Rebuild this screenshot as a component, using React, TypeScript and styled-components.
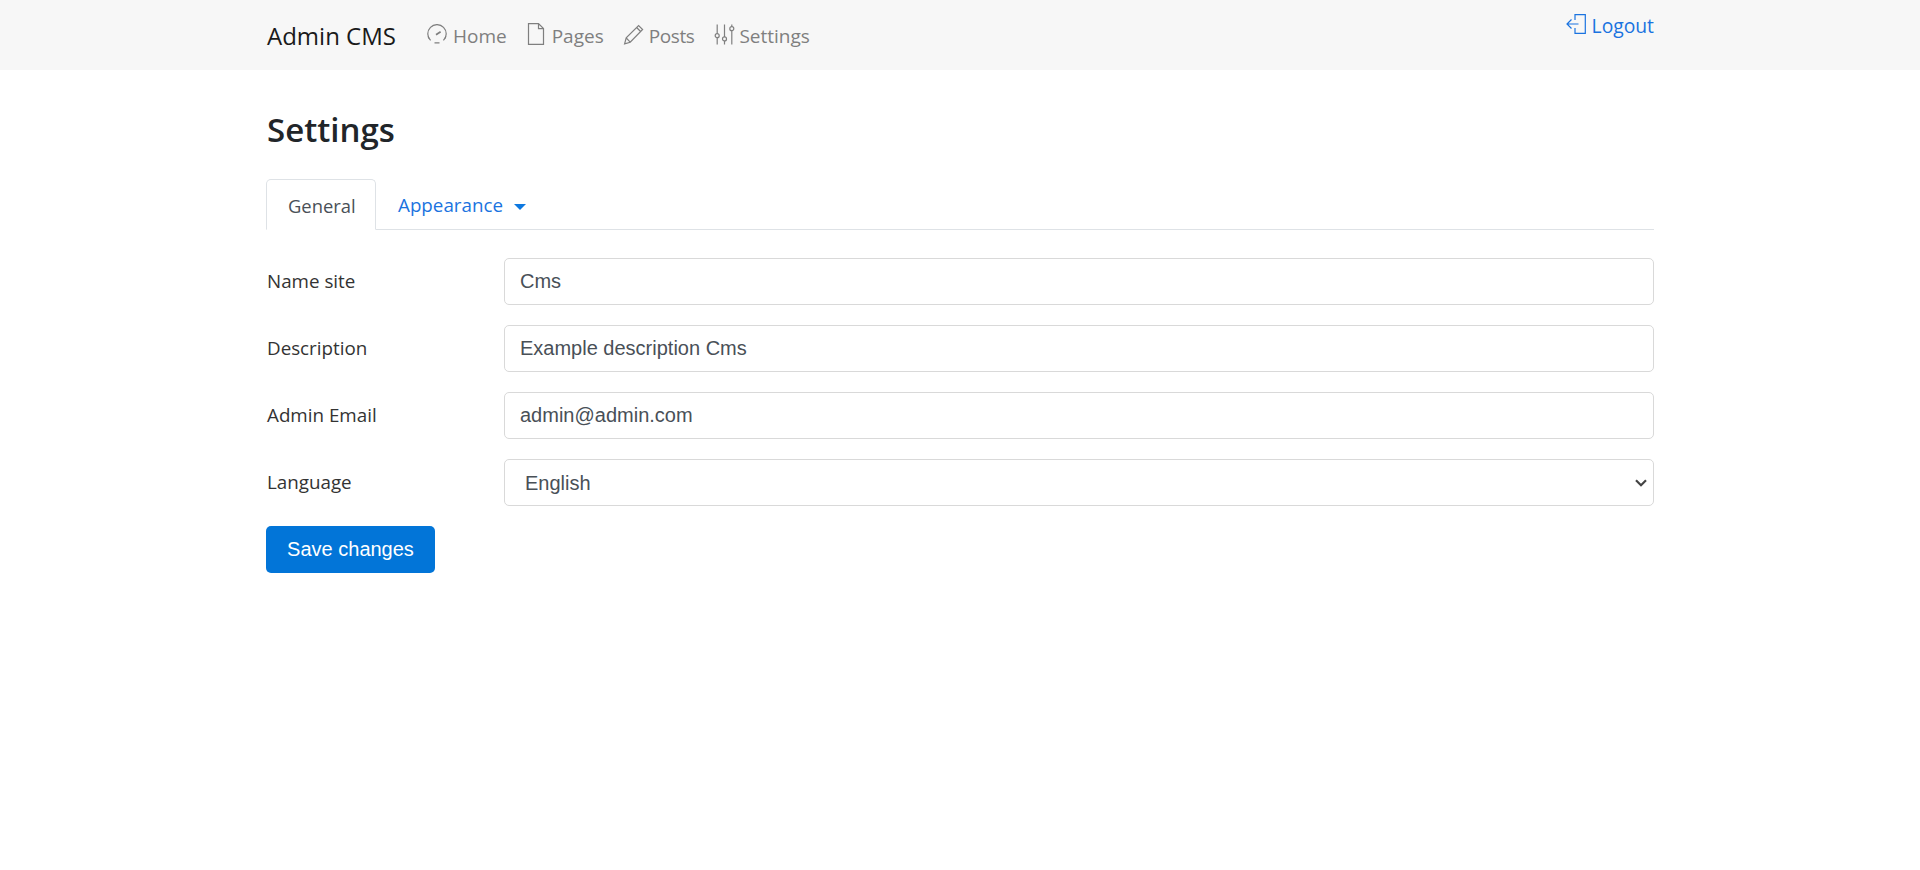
import React from "react";
import styled, { createGlobalStyle } from "styled-components";

const Global = createGlobalStyle`
  * { box-sizing: border-box; }
  html, body { margin: 0; padding: 0; background: #fff; }
  body { font-family: "Open Sans", "Noto Sans", sans-serif; font-size: 20px; line-height: 30px; color: #212529; }
`;

const Navbar = styled.nav`
  height: 70px;
  background: #f7f7f7;
`;
const NavInner = styled.div`
  width: 1388px;
  margin: 0 auto;
  display: flex;
  justify-content: space-between;
  align-items: flex-start;
`;
const NavLeft = styled.div`
  display: flex;
  align-items: center;
  height: 72px;
`;
const Brand = styled.a`
  font-size: 24px;
  padding-left: 1px;
  color: #1a1a1a;
  margin-right: 31px;
`;
const NavLink = styled.a<{ $gap: number; $after: number; $tight?: boolean }>`
  display: flex;
  align-items: center;
  gap: ${(p) => p.$gap}px;
  font-size: 19px;
  color: #7f7f7f;
  margin-right: ${(p) => p.$after}px;
  letter-spacing: ${(p) => (p.$tight ? "-0.4px" : "0")};
`;
const LogoutLink = styled.a`
  display: flex;
  align-items: center;
  gap: 6px;
  font-size: 19.3px;
  color: #1a73e0;
  height: 52px;
`;
const Icon = styled.svg`
  fill: none;
  stroke: currentColor;
  stroke-width: 1.2;
  flex: none;
  margin-top: -4px;
`;
const Main = styled.main`
  width: 1388px;
  margin: 0 auto;
`;
const Title = styled.h1`
  margin: 0;
  padding: 36px 0 0 1px;
  font-size: 33px;
  line-height: 48px;
  font-weight: 600;
  color: #212529;
`;
const Tabs = styled.div`
  display: flex;
  margin-top: 25px;
  height: 51px;
  border-bottom: 1px solid #dee2e6;
`;
const ActiveTab = styled.a`
  display: flex;
  align-items: center;
  width: 110px;
  height: 51px;
  padding: 2px 0 0 21px;
  background: #fff;
  border: 1px solid #dee2e6;
  border-bottom-color: #fff;
  border-radius: 5px 5px 0 0;
  font-size: 18.4px;
  color: #495057;
`;
const Tab = styled.a`
  display: flex;
  align-items: center;
  padding: 2px 0 0 22px;
  font-size: 18.8px;
  color: #1a73e0;
`;
const Caret = styled.span`
  width: 0;
  height: 0;
  margin-left: 11px;
  margin-top: 3px;
  border-top: 6px solid #0d78e0;
  border-left: 6px solid transparent;
  border-right: 6px solid transparent;
`;
const Form = styled.form`
  padding-top: 28px;
`;
const Row = styled.div`
  display: grid;
  grid-template-columns: 238px 1fr;
  align-items: center;
  margin-bottom: 20px;
`;
const Label = styled.label`
  padding: 0 0 2px 1px;
  font-size: 18.8px;
  color: #333;
`;
const Input = styled.input`
  height: 47px;
  width: 100%;
  padding: 0 15px;
  border: 1px solid #d9d9d9;
  border-radius: 5px;
  font-family: "Liberation Sans", Arial, sans-serif;
  font-size: 20px;
  color: #495057;
  background: #fff;
  outline: none;
`;
const SelectWrap = styled.div`
  position: relative;
  height: 47px;
`;
const Select = styled.select`
  appearance: none;
  display: block;
  height: 47px;
  width: 100%;
  padding: 0 30px 0 20px;
  border: 1px solid #d9d9d9;
  border-radius: 5px;
  font-family: "Liberation Sans", Arial, sans-serif;
  font-size: 20px;
  color: #495057;
  background: #fff;
  outline: none;
`;
const Chevron = styled.svg`
  position: absolute;
  top: 20px;
  right: 7px;
  fill: none;
  stroke: #444;
  stroke-width: 2.2;
  pointer-events: none;
`;
const SaveButton = styled.button`
  display: block;
  width: 169px;
  height: 47px;
  border: none;
  border-radius: 5px;
  background: #0275d8;
  color: #fff;
  font-family: "Liberation Sans", Arial, sans-serif;
  font-size: 20px;
`;

export default function App() {
  return (
    <>
      <Global />
      <Navbar>
        <NavInner>
          <NavLeft>
            <Brand>Admin CMS</Brand>
            <NavLink $gap={6} $after={18}>
              <Icon width="20" height="20" viewBox="0 0 20 20">
                <path d="M3.6 16.4A9.2 9.2 0 1 1 16.4 16.4" />
                <path d="M7.5 18.9h5M2 14.4l-.8-2M18 14.4l.8-2" />
                <path d="M9 10.8l4.6-3" strokeWidth="1.7" />
              </Icon>
              Home
            </NavLink>
            <NavLink $gap={6} $after={19}>
              <Icon width="21" height="22" viewBox="0 0 21 22">
                <path d="M3.5.6h10l5 5v15.8h-15zM13.5.6v5h5" />
              </Icon>
              Pages
            </NavLink>
            <NavLink $gap={5} $after={20} $tight>
              <Icon width="21" height="21" viewBox="0 0 21 21">
                <path d="M1.6 19.9l1.6-6L15.6 1.5l4 4L7.2 18.2zM13.6 3.5l4 4M3.2 13.9l4 4.3" />
              </Icon>
              Posts
            </NavLink>
            <NavLink $gap={4} $after={0}>
              <Icon width="21" height="21" viewBox="0 0 21 21">
                <path d="M3.2.5v9.2M3.2 13.7v6.8M10.5.5v12.4M10.5 16.9v3.6M17.8.5v2.2M17.8 6.7v13.8" />
                <circle cx="3.2" cy="11.7" r="2" />
                <circle cx="10.5" cy="14.9" r="2" />
                <circle cx="17.8" cy="4.7" r="2" />
              </Icon>
              Settings
            </NavLink>
          </NavLeft>
          <LogoutLink>
            <Icon width="20" height="20" viewBox="0 0 20 20">
              <path d="M9 6V.7h10.3v18.6H9V14M12.5 10H1M5.5 5.5L1 10l4.5 4.5" />
            </Icon>
            Logout
          </LogoutLink>
        </NavInner>
      </Navbar>
      <Main>
        <Title>Settings</Title>
        <Tabs>
          <ActiveTab>General</ActiveTab>
          <Tab>
            Appearance
            <Caret />
          </Tab>
        </Tabs>
        <Form>
          <Row>
            <Label>Name site</Label>
            <Input defaultValue="Cms" />
          </Row>
          <Row>
            <Label>Description</Label>
            <Input defaultValue="Example description Cms" />
          </Row>
          <Row>
            <Label>Admin Email</Label>
            <Input defaultValue="admin@admin.com" />
          </Row>
          <Row>
            <Label>Language</Label>
            <SelectWrap>
              <Select defaultValue="English">
                <option>English</option>
              </Select>
              <Chevron width="12" height="8" viewBox="0 0 12 8">
                <path d="M1 1.3l5 5 5-5" />
              </Chevron>
            </SelectWrap>
          </Row>
          <SaveButton type="button">Save changes</SaveButton>
        </Form>
      </Main>
    </>
  );
}
